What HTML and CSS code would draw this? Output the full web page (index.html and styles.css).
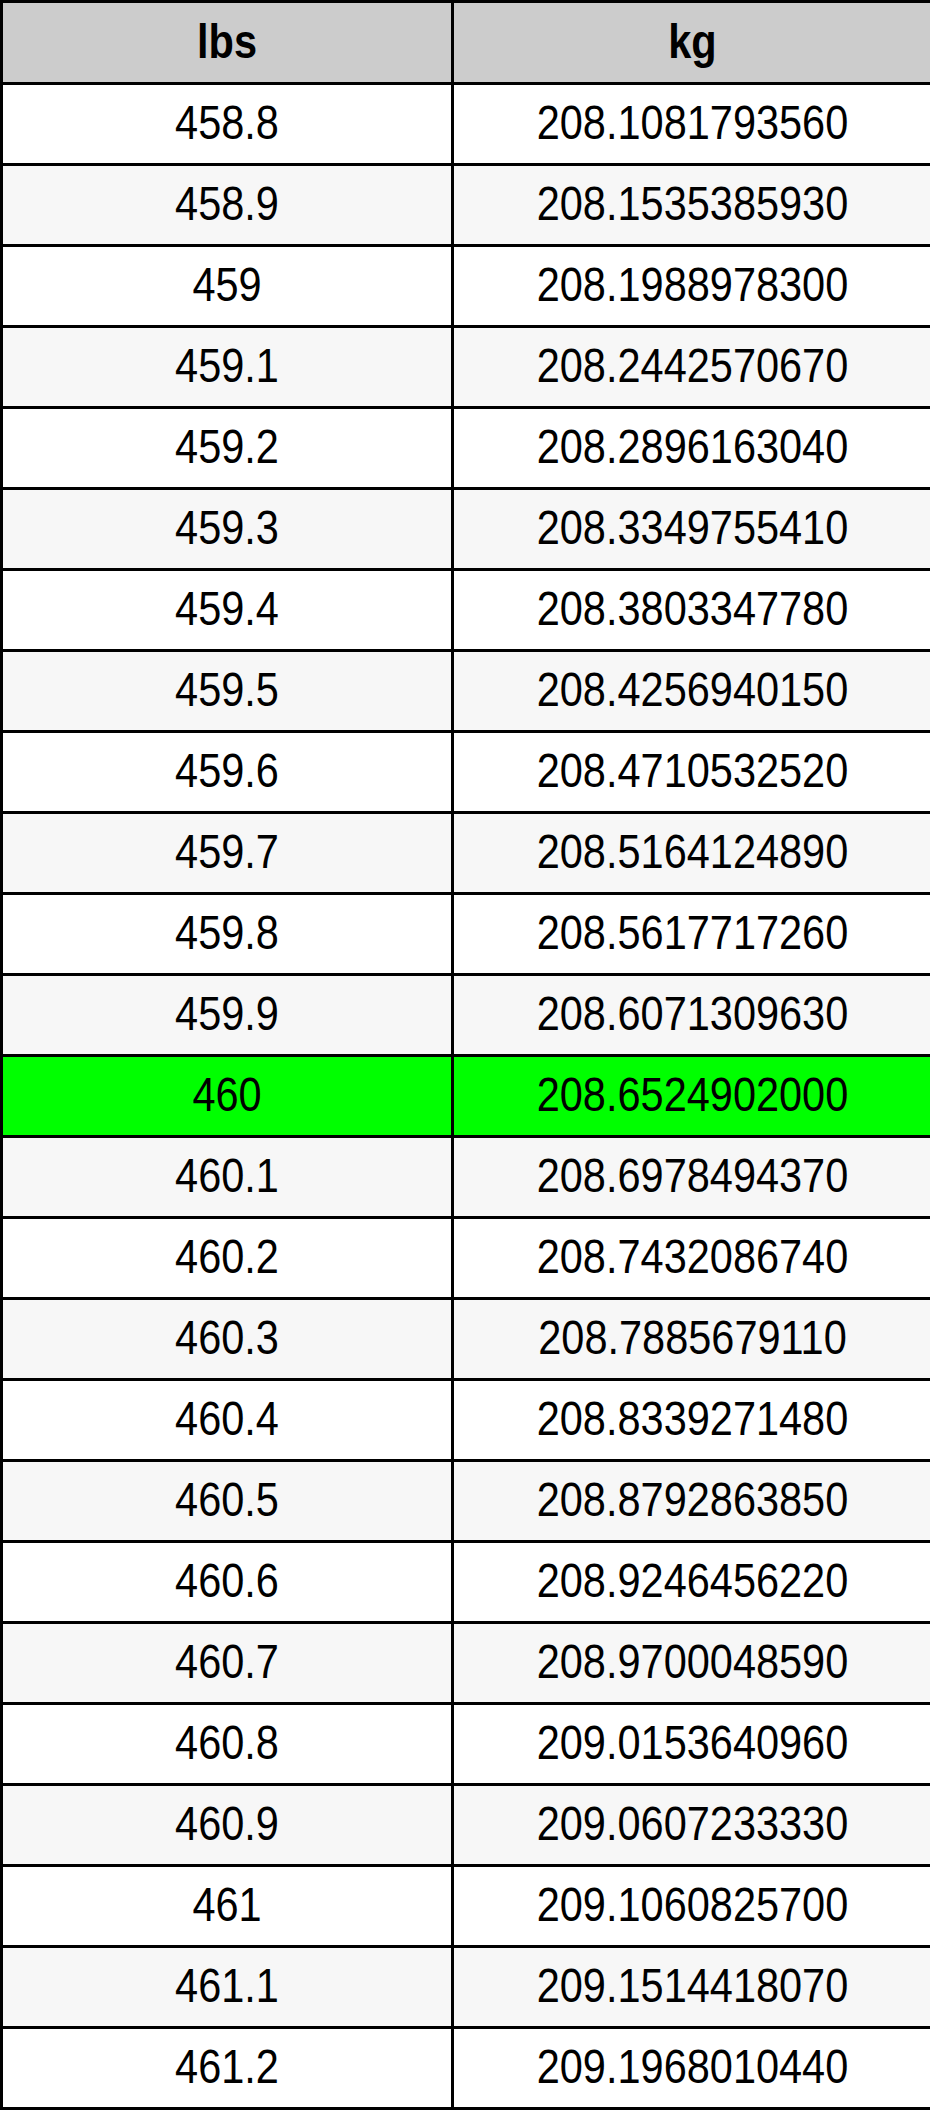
FILE: index.html
```html
<!DOCTYPE html>
<html>
<head>
<meta charset="utf-8">
<link rel="stylesheet" href="styles.css">
</head>
<body>
<table class="conv">
<thead>
<tr><th class="c1"><span class="t">lbs</span></th><th class="c2"><span class="t">kg</span></th></tr>
</thead>
<tbody>
<tr><td><span class="t">458.8</span></td><td><span class="t">208.1081793560</span></td></tr>
<tr class="alt"><td><span class="t">458.9</span></td><td><span class="t">208.1535385930</span></td></tr>
<tr><td><span class="t">459</span></td><td><span class="t">208.1988978300</span></td></tr>
<tr class="alt"><td><span class="t">459.1</span></td><td><span class="t">208.2442570670</span></td></tr>
<tr><td><span class="t">459.2</span></td><td><span class="t">208.2896163040</span></td></tr>
<tr class="alt"><td><span class="t">459.3</span></td><td><span class="t">208.3349755410</span></td></tr>
<tr><td><span class="t">459.4</span></td><td><span class="t">208.3803347780</span></td></tr>
<tr class="alt"><td><span class="t">459.5</span></td><td><span class="t">208.4256940150</span></td></tr>
<tr><td><span class="t">459.6</span></td><td><span class="t">208.4710532520</span></td></tr>
<tr class="alt"><td><span class="t">459.7</span></td><td><span class="t">208.5164124890</span></td></tr>
<tr><td><span class="t">459.8</span></td><td><span class="t">208.5617717260</span></td></tr>
<tr class="alt"><td><span class="t">459.9</span></td><td><span class="t">208.6071309630</span></td></tr>
<tr class="hl"><td><span class="t">460</span></td><td><span class="t">208.6524902000</span></td></tr>
<tr class="alt"><td><span class="t">460.1</span></td><td><span class="t">208.6978494370</span></td></tr>
<tr><td><span class="t">460.2</span></td><td><span class="t">208.7432086740</span></td></tr>
<tr class="alt"><td><span class="t">460.3</span></td><td><span class="t">208.7885679110</span></td></tr>
<tr><td><span class="t">460.4</span></td><td><span class="t">208.8339271480</span></td></tr>
<tr class="alt"><td><span class="t">460.5</span></td><td><span class="t">208.8792863850</span></td></tr>
<tr><td><span class="t">460.6</span></td><td><span class="t">208.9246456220</span></td></tr>
<tr class="alt"><td><span class="t">460.7</span></td><td><span class="t">208.9700048590</span></td></tr>
<tr><td><span class="t">460.8</span></td><td><span class="t">209.0153640960</span></td></tr>
<tr class="alt"><td><span class="t">460.9</span></td><td><span class="t">209.0607233330</span></td></tr>
<tr><td><span class="t">461</span></td><td><span class="t">209.1060825700</span></td></tr>
<tr class="alt"><td><span class="t">461.1</span></td><td><span class="t">209.1514418070</span></td></tr>
<tr><td><span class="t">461.2</span></td><td><span class="t">209.1968010440</span></td></tr>
</tbody>
</table>
</body>
</html>
```

FILE: styles.css
```css
html, body {
  margin: 0;
  padding: 0;
  background: #ffffff;
}
.conv {
  width: 930px;
  border-collapse: collapse;
  table-layout: fixed;
  font-family: "Liberation Sans", Arial, sans-serif;
  font-size: 41.5px;
  color: #000;
}
.conv th, .conv td {
  border: 3px solid #000;
  text-align: center;
  padding: 0;
  line-height: 78px;
  height: 78px;
}
.conv th {
  background: #cccccc;
  font-weight: bold;
  line-height: 79px;
  height: 79px;
}
.conv .t {
  display: inline-block;
  line-height: 1;
  vertical-align: middle;
  margin-bottom: 8px;
  transform: scaleY(1.14);
}
.conv .c1 { width: 448px; }
.conv .c2 { width: 477px; }
.conv tr.alt td { background: #f7f7f7; }
.conv tr.hl td { background: #00ff00; }
```
